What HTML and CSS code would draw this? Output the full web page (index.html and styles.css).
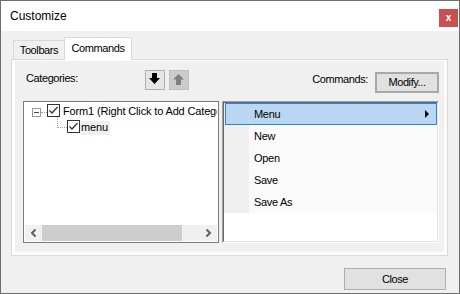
FILE: index.html
```html
<!DOCTYPE html>
<html lang="en">
<head>
  <meta charset="UTF-8" />
  <title>Customize</title>
  <link rel="stylesheet" href="styles.css">
</head>
<body>
  <div class="window">
    <!-- Title bar -->
    <div class="titlebar">
      <span class="title">Customize</span>
      <span class="close-x">x</span>
    </div>

    <div class="client">
      <div class="tabs">
        <div class="tab">Toolbars</div>
        <div class="tab active">Commands</div>
      </div>

      <div class="panel">
        <div class="page">
          <div class="page-head">
            <span class="cat-label">Categories:</span>
            <button class="arrow-btn">
              <svg width="18" height="18" viewBox="0 0 18 18"><polygon points="6,2 11,2 11,7 14,7 8.5,13 3,7 6,7" fill="#000"/></svg>
            </button>
            <button class="arrow-btn disabled">
              <svg width="18" height="18" viewBox="0 0 18 18"><polygon points="8.5,3 14,8.5 11,8.5 11,14 6,14 6,8.5 3,8.5" fill="#808080"/></svg>
            </button>
            <div class="head-right">
              <span class="cmd-label">Commands:</span>
              <button class="btn modify-btn">Modify...</button>
            </div>
          </div>

          <div class="page-body">
            <!-- Categories tree -->
            <div class="tree">
              <div class="tree-rows">
                <div class="tree-row">
                  <span class="indent-root"></span>
                  <span class="expander"><span class="minus"></span></span>
                  <span class="line-h"></span>
                  <svg class="check" width="13" height="13" viewBox="0 0 13 13"><rect x="0.5" y="0.5" width="12" height="12" fill="#fff" stroke="#333"/><path d="M2.5 6.5 L5 9 L10.5 3" fill="none" stroke="#333" stroke-width="1.3"/></svg>
                  <span class="node-text">Form1 (Right Click to Add Categories)</span>
                </div>
                <div class="tree-row">
                  <span class="indent-child"></span>
                  <span class="line-corner"></span>
                  <svg class="check" width="13" height="13" viewBox="0 0 13 13"><rect x="0.5" y="0.5" width="12" height="12" fill="#fff" stroke="#333"/><path d="M2.5 6.5 L5 9 L10.5 3" fill="none" stroke="#333" stroke-width="1.3"/></svg>
                  <span class="node-text selected">menu</span>
                </div>
              </div>
              <div class="hscroll">
                <span class="sb-btn">
                  <svg width="17" height="16" viewBox="0 0 17 16"><polyline points="10.5,4.5 7,8 10.5,11.5" fill="none" stroke="#606060" stroke-width="2"/></svg>
                </span>
                <span class="sb-thumb"></span>
                <span class="sb-track"></span>
                <span class="sb-btn">
                  <svg width="17" height="16" viewBox="0 0 17 16"><polyline points="6.5,4.5 10,8 6.5,11.5" fill="none" stroke="#606060" stroke-width="2"/></svg>
                </span>
              </div>
            </div>

            <!-- Commands list -->
            <div class="cmd-list">
              <div class="cmd-inner">
                <div class="cmd-items">
                  <div class="cmd-item selected"><span>Menu</span><span class="sub-arrow"></span></div>
                  <div class="cmd-item">New</div>
                  <div class="cmd-item">Open</div>
                  <div class="cmd-item">Save</div>
                  <div class="cmd-item">Save As</div>
                </div>
              </div>
            </div>
          </div>
        </div>
      </div>

      <div class="footer">
        <button class="btn close-btn">Close</button>
      </div>
    </div>
  </div>
</body>
</html>
```

FILE: styles.css
```css
* {
  box-sizing: border-box;
}

body {
  margin: 0;
  font-family: "Liberation Sans", Arial, sans-serif;
  font-size: 11px;
  line-height: 13px;
  color: #000;
  background: #fff;
}

.window {
  width: 460px;
  height: 294px;
  border: 1px solid #6e6e6e;
  display: flex;
  flex-direction: column;
}

.titlebar {
  height: 30px;
  background: #fff;
  display: flex;
  align-items: center;
  padding-left: 9px;
}

.title {
  flex: 1;
  font-size: 12px;
}

.close-x {
  align-self: flex-start;
  margin-top: 8px;
  margin-right: 1px;
  width: 19px;
  height: 18px;
  padding-bottom: 1px;
  background: #c75050;
  color: #fff;
  font-weight: bold;
  font-size: 10px;
  display: flex;
  align-items: center;
  justify-content: center;
}

.client {
  flex: 1;
  background: #f0f0f0;
  padding-top: 6px;
  letter-spacing: -0.4px;
}

.tabs {
  display: flex;
  align-items: flex-end;
  height: 22px;
  margin-left: 12px;
}

.tab {
  width: 52px;
  height: 19px;
  border: 1px solid #d9d9d9;
  border-bottom: none;
  background: #f0f0f0;
  display: flex;
  align-items: center;
  justify-content: center;
}

.tab.active {
  position: relative;
  width: 68px;
  height: 23px;
  margin-left: -1px;
  margin-bottom: -1px;
  padding-bottom: 2px;
  background: #fff;
}

.panel {
  margin-left: 10px;
  width: 437px;
  height: 197px;
  border: 1px solid #d9d9d9;
  background: #fff;
  padding: 1px 3px 3px 3px;
}

.page {
  height: 100%;
  background: #f0f0f0;
}

.page-head {
  display: flex;
  align-items: flex-start;
  height: 40px;
  padding: 0 5px 0 11px;
}

.cat-label {
  width: 119px;
  margin-top: 11px;
}

.arrow-btn {
  width: 20px;
  height: 20px;
  margin-top: 9px;
  margin-right: 4px;
  padding: 0;
  border: 1px solid #adadad;
  background: #e5e5e5;
  display: flex;
}

.arrow-btn.disabled {
  background: #cccccc;
  border-color: #bfbfbf;
}

.head-right {
  margin-left: auto;
  display: flex;
  align-items: flex-start;
}

.cmd-label {
  margin-top: 12px;
  margin-right: 7px;
}

.btn {
  font: inherit;
  letter-spacing: inherit;
  color: #000;
  background: #e1e1e1;
  border: 1px solid #adadad;
  padding: 0;
}

.modify-btn {
  width: 64px;
  height: 21px;
  margin-top: 11px;
  border: 2px solid #a8a8a8;
}

.page-body {
  display: flex;
  gap: 3px;
  padding-left: 8px;
}

/* tree view */
.tree {
  width: 196px;
  height: 142px;
  border: 1px solid #7a7a7a;
  padding: 1px;
  background: #fff;
  display: flex;
  flex-direction: column;
  letter-spacing: -0.15px;
}

.tree-rows {
  flex: 1;
  overflow: hidden;
}

.tree-row {
  height: 16px;
  display: flex;
  align-items: flex-start;
  white-space: nowrap;
}

.indent-root {
  width: 7px;
  flex-shrink: 0;
}

.expander {
  width: 9px;
  height: 9px;
  margin-top: 5px;
  border: 1px solid #9a9a9a;
  background: #fff;
  display: flex;
  align-items: center;
  justify-content: center;
  flex-shrink: 0;
}

.minus {
  width: 5px;
  height: 1px;
  background: #4a4a4a;
}

.line-h {
  width: 6px;
  margin-top: 9px;
  border-top: 1px dotted #a0a0a0;
  flex-shrink: 0;
}

.check {
  margin-top: 1px;
  flex-shrink: 0;
}

.node-text {
  margin-top: 2px;
  margin-left: 3px;
}

.indent-child {
  width: 32px;
  flex-shrink: 0;
}

.line-corner {
  width: 10px;
  height: 11px;
  margin-top: -2px;
  border-left: 1px dotted #a0a0a0;
  border-bottom: 1px dotted #a0a0a0;
  flex-shrink: 0;
}

.node-text.selected {
  margin-left: 0;
  padding: 0 2px 1px 1px;
  background: #f0f0f0;
}

.hscroll {
  height: 16px;
  display: flex;
  background: #f0f0f0;
}

.sb-btn {
  width: 17px;
  display: flex;
}

.sb-thumb {
  width: 140px;
  background: #cdcdcd;
}

.sb-track {
  flex: 1;
}

/* commands list */
.cmd-list {
  width: 217px;
  height: 142px;
  border: 1px solid;
  border-color: #a0a0a0 #fff #fff #a0a0a0;
}

.cmd-inner {
  height: 100%;
  border: 1px solid;
  border-color: #696969 #e3e3e3 #e3e3e3 #696969;
  background: #fff;
}

.cmd-items {
  background: linear-gradient(to right, #f0f0f0 25px, #fafafa 25px);
  letter-spacing: -0.3px;
}

.cmd-item {
  height: 22px;
  padding-left: 30px;
  display: flex;
  align-items: center;
}

.cmd-item.selected {
  margin-left: 1px;
  padding: 0 7px 0 28px;
  justify-content: space-between;
  background: #b9d7f2;
  border: 1px solid #2b84d8;
}

.sub-arrow {
  width: 0;
  height: 0;
  border-left: 4px solid #000;
  border-top: 4px solid transparent;
  border-bottom: 4px solid transparent;
}

.footer {
  display: flex;
  justify-content: flex-end;
  padding: 12px 13px 0 0;
}

.close-btn {
  width: 102px;
  height: 22px;
}
```
